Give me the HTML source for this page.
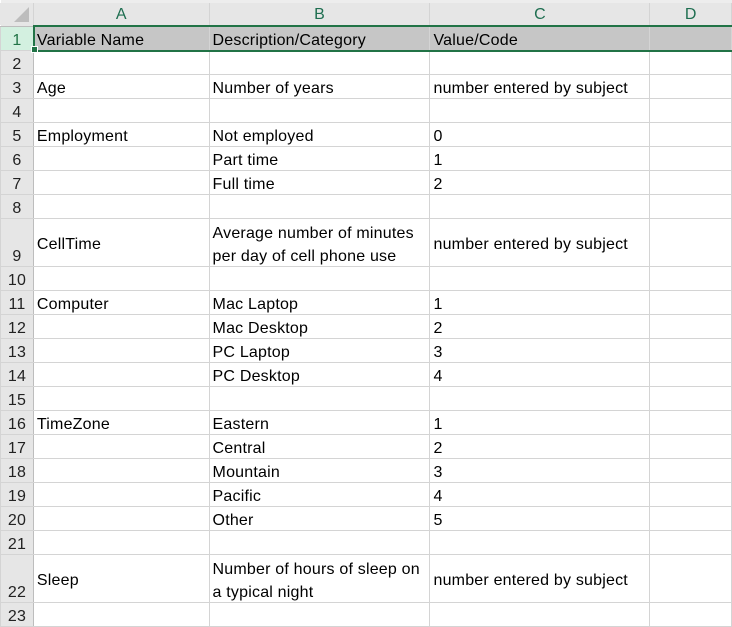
<!DOCTYPE html><html><head><style>
body{margin:0;width:732px;height:622px;overflow:hidden;background:#fff;font-family:"Liberation Sans",sans-serif;font-size:16px;letter-spacing:0.2px;color:#000}
table{border-collapse:collapse;table-layout:fixed;position:absolute;left:0;top:0}
td{border:1px solid #d4d4d4;padding:0 0 0 3px;height:22px;white-space:nowrap;overflow:hidden;vertical-align:bottom;line-height:19px;box-sizing:border-box}
tr{height:24px}
td.r{background:#e6e6e6;text-align:center;padding:0;border-right:1px solid #bdbdbd;color:#222}
tr.h{height:25px}
tr.h td{background:#e6e6e6;text-align:center;color:#1e6e50;border-top:3px solid #ededed;border-bottom:1px solid #bdbdbd;padding:0;border-left:1px solid #c8c8c8;vertical-align:middle;letter-spacing:0;line-height:20px}
tr.s td{background:#c6c6c6}
tr.s td.r{background:#d3f0e0;color:#217346}
tr.d{height:48px}
tr.d td{vertical-align:middle;line-height:23px}
tr.d td span{position:relative;top:2px;display:inline-block}
tr.d td.r{vertical-align:bottom;line-height:19px}
.sel{position:absolute;left:33px;top:25px;width:710px;height:23px;border:2px solid #217346}
.hand{position:absolute;left:31px;top:46px;width:5px;height:5px;background:#217346;border:1px solid #fff}
.corner{position:absolute;left:0;top:3px;width:33px;height:22px;background:#e6e6e6}
</style></head><body>
<table>
<col style="width:33px"><col style="width:176px"><col style="width:221px"><col style="width:220px"><col style="width:82px">
<tr class="h"><td style="border-left:none"></td><td>A</td><td>B</td><td>C</td><td>D</td></tr>
<tr class="s"><td class="r">1</td><td>Variable Name</td><td>Description/Category</td><td>Value/Code</td><td></td></tr>
<tr><td class="r">2</td><td></td><td></td><td></td><td></td></tr>
<tr><td class="r">3</td><td>Age</td><td>Number of years</td><td>number entered by subject</td><td></td></tr>
<tr><td class="r">4</td><td></td><td></td><td></td><td></td></tr>
<tr><td class="r">5</td><td>Employment</td><td>Not employed</td><td>0</td><td></td></tr>
<tr><td class="r">6</td><td></td><td>Part time</td><td>1</td><td></td></tr>
<tr><td class="r">7</td><td></td><td>Full time</td><td>2</td><td></td></tr>
<tr><td class="r">8</td><td></td><td></td><td></td><td></td></tr>
<tr class="d"><td class="r">9</td><td><span>CellTime</span></td><td><span>Average number of minutes<br>per day of cell phone use</span></td><td><span>number entered by subject</span></td><td></td></tr>
<tr><td class="r">10</td><td></td><td></td><td></td><td></td></tr>
<tr><td class="r">11</td><td>Computer</td><td>Mac Laptop</td><td>1</td><td></td></tr>
<tr><td class="r">12</td><td></td><td>Mac Desktop</td><td>2</td><td></td></tr>
<tr><td class="r">13</td><td></td><td>PC Laptop</td><td>3</td><td></td></tr>
<tr><td class="r">14</td><td></td><td>PC Desktop</td><td>4</td><td></td></tr>
<tr><td class="r">15</td><td></td><td></td><td></td><td></td></tr>
<tr><td class="r">16</td><td>TimeZone</td><td>Eastern</td><td>1</td><td></td></tr>
<tr><td class="r">17</td><td></td><td>Central</td><td>2</td><td></td></tr>
<tr><td class="r">18</td><td></td><td>Mountain</td><td>3</td><td></td></tr>
<tr><td class="r">19</td><td></td><td>Pacific</td><td>4</td><td></td></tr>
<tr><td class="r">20</td><td></td><td>Other</td><td>5</td><td></td></tr>
<tr><td class="r">21</td><td></td><td></td><td></td><td></td></tr>
<tr class="d"><td class="r">22</td><td><span>Sleep</span></td><td><span>Number of hours of sleep on<br>a typical night</span></td><td><span>number entered by subject</span></td><td></td></tr>
<tr><td class="r">23</td><td></td><td></td><td></td><td></td></tr>
</table>
<div class="corner"><svg width="33" height="22"><polygon points="29,4 29,19 14,19" fill="#bdbdbd"/></svg></div>
<div class="sel"></div><div class="hand"></div>
</body></html>
